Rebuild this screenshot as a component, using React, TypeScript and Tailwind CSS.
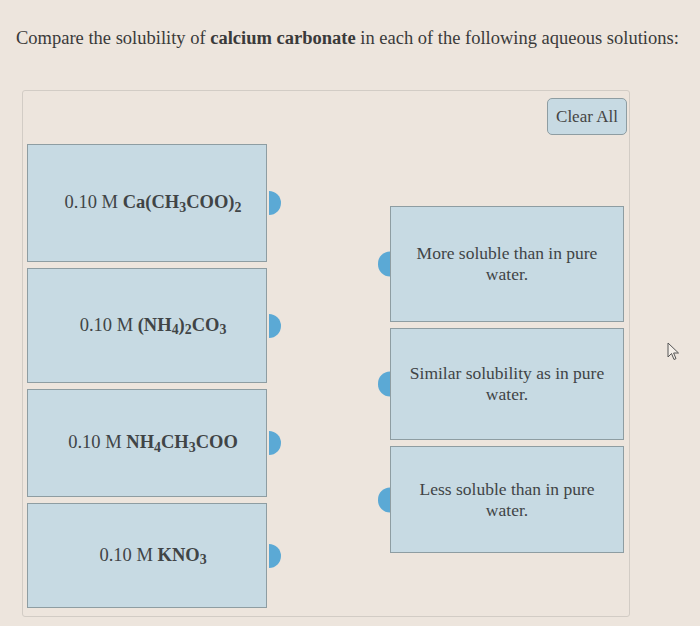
import type { ReactNode } from "react"

const sources: { h: string; body: ReactNode }[] = [
  {
    h: "h-[118px]",
    body: (
      <>
        0.10 M <b>Ca(CH<sub>3</sub>COO)<sub>2</sub></b>
      </>
    ),
  },
  {
    h: "h-[115px]",
    body: (
      <>
        0.10 M <b>(NH<sub>4</sub>)<sub>2</sub>CO<sub>3</sub></b>
      </>
    ),
  },
  {
    h: "h-[108px]",
    body: (
      <>
        0.10 M <b>NH<sub>4</sub>CH<sub>3</sub>COO</b>
      </>
    ),
  },
  {
    h: "h-[105px]",
    body: (
      <>
        0.10 M <b>KNO<sub>3</sub></b>
      </>
    ),
  },
]

const targets = [
  { h: "h-[116px]", label: "More soluble than in pure water." },
  { h: "h-[112px]", label: "Similar solubility as in pure water." },
  { h: "h-[107px]", label: "Less soluble than in pure water." },
]

function SourceCard({ h, children }: { h: string; children: ReactNode }) {
  return (
    <div className={`relative flex ${h} items-center justify-center border border-[#8e9da2] bg-[#c7dae3] pl-[12px] text-[18.5px] text-[#404446]`}>
      <span>{children}</span>
      <span className="absolute right-[-15px] top-1/2 h-[24px] w-[12px] -translate-y-1/2 rounded-r-full bg-[#5ba9d5]" />
    </div>
  )
}

function TargetCard({ h, label }: { h: string; label: string }) {
  return (
    <div className={`relative flex ${h} items-center justify-center border border-[#8e9da2] bg-[#c7dae3] px-[12px] text-center text-[17.5px] leading-[21px] text-[#404446]`}>
      <span>{label}</span>
      <span className="absolute left-[-13px] top-1/2 h-[25px] w-[12px] -translate-y-1/2 rounded-l-full bg-[#5ba9d5]" />
    </div>
  )
}

export default function App() {
  return (
    <div className="relative h-[626px] w-[700px] overflow-hidden bg-[#ede5dd] font-['Liberation_Serif',serif]">
      <p className="pl-[16px] pt-[26px] text-[18.5px] leading-[24px] text-[#3a3a3a]">
        Compare the solubility of <b>calcium carbonate</b> in each of the following aqueous solutions:
      </p>

      <div className="ml-[22px] mt-[40px] h-[527px] w-[608px] rounded-[3px] border border-[#d2ccc5]">
        <div className="flex justify-end pr-[2px] pt-[7px]">
          <button className="h-[37px] w-[80px] rounded-[5px] border border-[#8e9da2] bg-[#c7dae3] text-[17px] text-[#444]">
            Clear All
          </button>
        </div>

        <div className="mt-[9px] flex justify-between">
          <div className="ml-[4px] flex w-[240px] flex-col gap-[6px]">
            {sources.map((s, i) => (
              <SourceCard key={i} h={s.h}>
                {s.body}
              </SourceCard>
            ))}
          </div>
          <div className="mr-[5px] mt-[62px] flex w-[234px] flex-col gap-[6px]">
            {targets.map((t) => (
              <TargetCard key={t.label} h={t.h} label={t.label} />
            ))}
          </div>
        </div>
      </div>

      {/* mouse pointer */}
      <svg className="absolute left-[667px] top-[342px]" width="13" height="19" viewBox="0 0 13 19">
        <path d="M1 1 L1 15 L4.5 11.5 L7 17.5 L9 16.6 L6.6 11 L11.5 11 Z" fill="#f4efe9" stroke="#555" strokeWidth="1" strokeLinejoin="round" />
      </svg>
    </div>
  )
}
